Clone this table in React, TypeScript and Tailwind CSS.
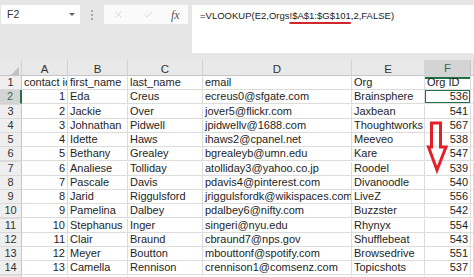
import { Check, X } from 'lucide-react';

const cols = ['A', 'B', 'C', 'D', 'E', 'F'];

const rows: string[][] = [
    ['contact id', 'first_name', 'last_name', 'email', 'Org', 'Org ID'],
    ['1', 'Eda', 'Creus', 'ecreus0@sfgate.com', 'Brainsphere', '536'],
    ['2', 'Jackie', 'Over', 'jover5@flickr.com', 'Jaxbean', '541'],
    ['3', 'Johnathan', 'Pidwell', 'jpidwellv@1688.com', 'Thoughtworks', '567'],
    ['4', 'Idette', 'Haws', 'ihaws2@cpanel.net', 'Meeveo', '538'],
    ['5', 'Bethany', 'Grealey', 'bgrealeyb@umn.edu', 'Kare', '547'],
    ['6', 'Analiese', 'Tolliday', 'atolliday3@yahoo.co.jp', 'Roodel', '539'],
    ['7', 'Pascale', 'Davis', 'pdavis4@pinterest.com', 'Divanoodle', '540'],
    ['8', 'Jarid', 'Riggulsford', 'jriggulsfordk@wikispaces.com', 'LiveZ', '556'],
    ['9', 'Pamelina', 'Dalbey', 'pdalbey6@nifty.com', 'Buzzster', '542'],
    ['10', 'Stephanus', 'Inger', 'singeri@nyu.edu', 'Rhynyx', '554'],
    ['11', 'Clair', 'Braund', 'cbraund7@nps.gov', 'Shufflebeat', '543'],
    ['12', 'Meyer', 'Boutton', 'mbouttonf@spotify.com', 'Browsedrive', '551'],
    ['13', 'Camella', 'Rennison', 'crennison1@comsenz.com', 'Topicshots', '537'],
    ['', '', '', '', '', ''],
];

const gridCols = 'grid grid-cols-[22px_46px_60px_75px_149px_73px_46px_1fr]';

function Toolbar() {
    return (
        <div className="h-[60px] bg-[#e6e6e6] flex items-start pt-[5px] pl-[1px]">
            <div className="w-[79px] h-[19px] bg-white flex items-center justify-between pl-[6px] pr-[5px] text-[10.5px] text-[#333]">
                <span>F2</span>
                <span className="w-0 h-0 border-l-[3px] border-r-[3px] border-t-[3px] border-l-transparent border-r-transparent border-t-[#666]" />
            </div>
            <div className="w-[24px] h-[19px] flex flex-col items-center justify-center gap-[2px]">
                <span className="w-[2px] h-[2px] bg-[#a8a8a8]" />
                <span className="w-[2px] h-[2px] bg-[#a8a8a8]" />
                <span className="w-[2px] h-[2px] bg-[#a8a8a8]" />
            </div>
            <div className="w-[84px] h-[19px] bg-[#fafafa] flex items-center pl-[9px] text-[#b8b8b8]">
                <X size={11} strokeWidth={1.2} />
                <Check size={11} strokeWidth={1.2} className="ml-[19px]" />
                <span className="ml-[17px] text-[12px] italic text-[#555] font-['Liberation_Serif',serif]">fx</span>
            </div>
            <div className="ml-[4px] flex-1 h-[48px] bg-white pl-[8px] pt-[4px] text-[9.5px] text-[#222]">
                =VLOOKUP(E2,Orgs
                <span className="underline decoration-[#d0262c] decoration-2 underline-offset-[3px]">!$A$1:$G$101</span>
                ,2,FALSE)
            </div>
        </div>
    );
}

function HeaderRow() {
    return (
        <div className={`${gridCols} h-[16px] bg-[#e9e9e9] border-b border-[#c6c6c6] text-[11.5px] text-[#333]`}>
            <div className="border-r border-[#cfcfcf] flex items-end justify-end pr-[2px] pb-[2px]">
                <svg width="10" height="10" viewBox="0 0 10 10">
                    <path d="M10 0 V10 H0 Z" fill="#c2c2c2" />
                </svg>
            </div>
            {cols.map((c) => (
                <div
                    key={c}
                    className={
                        c === 'F'
                            ? 'bg-[#d4d4d4] text-[#3d6b4f] border-r border-[#c6c6c6] border-b-2 border-b-[#217346] flex items-center justify-center'
                            : 'border-r border-[#d2d2d2] flex items-center justify-center'
                    }
                >
                    {c}
                </div>
            ))}
            <div className="border-r border-[#d2d2d2]" />
            <div />
        </div>
    );
}

export default function App() {
    return (
        <div className="relative w-[474px] h-[277px] overflow-hidden bg-white font-['Liberation_Sans',Arial,sans-serif]">
            <Toolbar />
            <HeaderRow />
            {rows.map((r, i) => {
                const n = i + 1;
                const sel = n === 2;
                return (
                    <div key={n} className={`${gridCols} h-[14.25px] text-[11px] leading-[13px] text-[#1e1e1e]`}>
                        <div
                            className={
                                sel
                                    ? 'bg-[#d4d4d4] text-[#3d6b4f] border-r-2 border-[#217346] border-b border-b-[#d2d2d2] flex items-center justify-center'
                                    : 'bg-[#efefef] text-[#333] border-r border-[#c6c6c6] border-b border-b-[#dadada] flex items-center justify-center'
                            }
                        >
                            {n}
                        </div>
                        {r.map((v, j) => {
                            const right = n > 1 && (j === 0 || j === 5);
                            return (
                                <div
                                    key={j}
                                    className={`relative border-r border-b border-[#dcdcdc] overflow-hidden whitespace-nowrap flex items-center ${
                                        right ? 'justify-end pr-[2px]' : 'pl-[2px]'
                                    }`}
                                >
                                    {v}
                                    {sel && j === 5 && (
                                        <span className="absolute -left-px -top-px -right-px -bottom-px border-2 border-[#217346]" />
                                    )}
                                </div>
                            );
                        })}
                        <div className="border-r border-b border-[#dcdcdc]" />
                        <div className="border-b border-[#dcdcdc]" />
                    </div>
                );
            })}
            <svg
                className="absolute left-[424px] top-[118px]"
                width="26"
                height="57"
                viewBox="0 0 26 57"
                fill="none"
            >
                <path
                    d="M7.5 5 H16.5 V29 H22 L13 52 L4.5 29 H7.5 Z"
                    stroke="#e3202a"
                    strokeWidth="3"
                    strokeLinejoin="miter"
                />
            </svg>
        </div>
    );
}
